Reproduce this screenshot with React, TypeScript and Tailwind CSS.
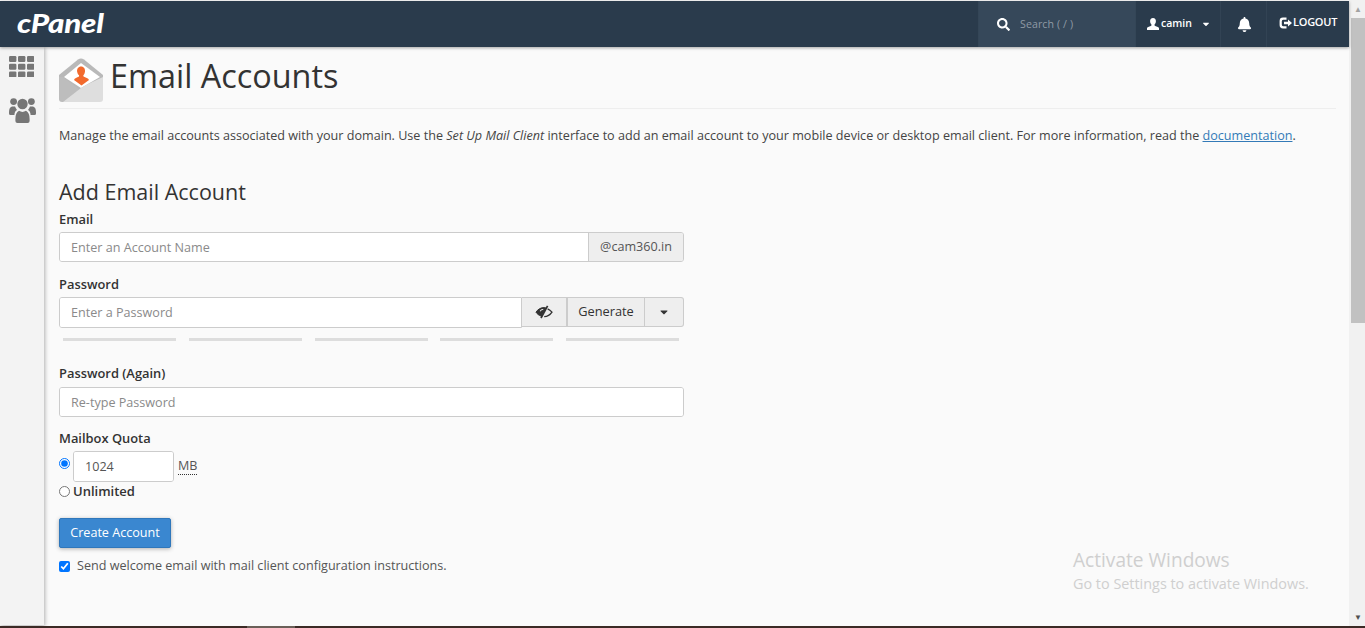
import React from "react";
import { FaSearch, FaBell, FaCaretDown } from "react-icons/fa";

function Grid() {
  const cells: React.ReactNode[] = [];
  for (let r = 0; r < 3; r++)
    for (let c = 0; c < 3; c++)
      cells.push(<rect key={`${r}-${c}`} x={c * 9} y={r * 7.7} width="7.4" height="6" rx="1.2" fill="#767676" />);
  return (
    <svg width="25" height="21" viewBox="0 0 25 21">
      {cells}
    </svg>
  );
}

function UsersIcon() {
  return (
    <svg width="27" height="26" viewBox="0 0 27 26" fill="#767676">
      <circle cx="4.6" cy="4.6" r="3.4" />
      <circle cx="22.4" cy="4.6" r="3.4" />
      <path d="M0 15 Q0 10.5 3 9.6 L6 9.6 Q6.8 11.6 8 13 Q5.6 14 5.4 18 L1.5 18 Q0 18 0 16.5 Z" />
      <path d="M27 15 Q27 10.5 24 9.6 L21 9.6 Q20.2 11.6 19 13 Q21.4 14 21.6 18 L25.5 18 Q27 18 27 16.5 Z" />
      <circle cx="13.5" cy="7" r="5.2" />
      <path d="M6.4 22 Q6.4 15.5 10 13.8 Q13.5 16 17 13.8 Q20.6 15.5 20.6 22 L20.6 24 Q20.6 26 18.6 26 L8.4 26 Q6.4 26 6.4 24 Z" />
    </svg>
  );
}

function EnvelopeIcon() {
  return (
    <svg width="44" height="44" viewBox="0 0 44 44" className="mt-[1px] shrink-0">
      <path d="M0 17 L19 1.5 Q22 -0.5 25 1.5 L44 17 L44 24 L22 36 L0 24 Z" fill="#b9b9b9" />
      <path d="M5 19 L22 5 L41 19 L22 30 Z" fill="#ffffff" />
      <path d="M22 8.5 C25 8.5 26.3 11 26 13.5 C25.8 15.5 25 16.6 24.3 17.3 L24.5 18.6 C26.5 19.4 29.5 20.4 30 22 L22.5 27.5 L15 22 C15.5 20.4 18 19.4 20 18.6 L20.1 17.3 C19.2 16.6 18.4 15.5 18.1 13.5 C17.8 11 19.3 8.5 22 8.5 Z" fill="#f26a2d" />
      <path d="M0 19 L0 41 Q0 44 3 44 L8 44 L22 33 L4 19 Z" fill="#bdbdbd" />
      <path d="M44 19 L44 41 Q44 44 41 44 L4 44 L22 30 L27 27 Z" fill="#dedede" />
    </svg>
  );
}

function LogoutIcon() {
  return (
    <svg width="13" height="12" viewBox="0 0 13 12">
      <path d="M7.5 0.6 H4 A3.4 3.4 0 0 0 0.6 4 V8 A3.4 3.4 0 0 0 4 11.4 H7.5 V9.3 H4.2 A1.5 1.5 0 0 1 2.8 7.8 V4.2 A1.5 1.5 0 0 1 4.2 2.7 H7.5 Z" fill="#fff" />
      <path d="M5 4.8 H9 V2.4 L13 6 L9 9.6 V7.2 H5 Z" fill="#fff" />
    </svg>
  );
}

function UserGlyph() {
  return (
    <svg width="12" height="12" viewBox="0 0 12 12" fill="#fff">
      <path d="M6 0 C8 0 9 1.5 8.9 3.3 C8.8 5 8.2 6 7.5 6.6 L7.7 7.8 C9 8.3 11.6 8.9 12 10 L12 12 L0 12 L0 10 C0.4 8.9 3 8.3 4.3 7.8 L4.5 6.6 C3.8 6 3.2 5 3.1 3.3 C3 1.5 4 0 6 0 Z" />
    </svg>
  );
}

function EyeSlash() {
  return (
    <svg width="18" height="14" viewBox="0 0 18 14">
      <path d="M1 7.2 C3 4.2 5.6 2.6 9 2.6 L11 3 L6.2 11 C4 10.4 2.4 9.2 1 7.2 Z" fill="#333" stroke="#333" strokeWidth="1" />
      <path d="M12.6 3.8 C14.4 4.6 15.8 5.8 17 7.2 C15.2 9.8 12.6 11.6 9.2 11.7" fill="none" stroke="#333" strokeWidth="1.3" />
      <path d="M12.6 0.8 L6 13" stroke="#333" strokeWidth="1.7" />
      <path d="M5.2 6.2 C6 4.8 7.2 4.4 8.2 4.6" fill="none" stroke="#eee" strokeWidth="1.1" />
    </svg>
  );
}

function Header() {
  return (
    <header className="relative z-10 flex h-[46px] w-full items-stretch bg-[#2a3b4c] shadow-[0_1px_3px_rgba(0,0,0,0.35)]">
      <div className="flex-1 pt-[6px] pl-[17px]">
        <div className="origin-left scale-x-[1.16] font-['Lato',sans-serif] text-[27px] leading-[32px] font-black tracking-[-0.2px] text-white italic">
          cPanel
        </div>
      </div>
      <div className="flex w-[158px] items-center border-x border-[#344657] bg-[#36485a] pl-[18px] text-[10.6px] text-[#8f9aa5]">
        <FaSearch className="mr-[10px] text-[13px] text-white" />
        <span className="pt-[1px] tracking-[0.1px]">Search ( / )</span>
      </div>
      <div className="flex w-[85px] items-center border-r border-[#324354] pl-[11px] text-[10.5px] font-semibold text-white">
        <UserGlyph />
        <span className="ml-[2px]">camin</span>
        <FaCaretDown className="ml-[9px] text-[10px]" />
      </div>
      <div className="flex w-[46px] items-center justify-center border-r border-[#324354] pl-[2px] text-white">
        <FaBell className="text-[15px]" />
      </div>
      <div className="flex w-[82px] items-center gap-[1px] pb-[3px] pl-[12px] text-[11px] font-semibold tracking-[-0.25px] text-white">
        <LogoutIcon />
        <span>LOGOUT</span>
      </div>
    </header>
  );
}

function Sidebar() {
  return (
    <aside className="flex h-[578px] w-[44px] shrink-0 flex-col items-start bg-[#f3f3f3] pt-[9px] pl-[9px] shadow-[1px_1px_4px_rgba(0,0,0,0.3)]">
      <Grid />
      <div className="mt-[20px]">
        <UsersIcon />
      </div>
    </aside>
  );
}

const inputClass =
  "h-full w-full bg-white px-[11px] text-[12.6px] text-[#555] placeholder:text-[#8a8a8a] outline-none font-['Open_Sans',sans-serif]";

function Label({ children }: { children: React.ReactNode }) {
  return <div className="text-[12.9px] leading-[20px] font-semibold text-[#333]">{children}</div>;
}

function Form() {
  return (
    <div className="w-[625px]">
      <h2 className="mt-[31px] text-[21.5px] leading-[30px] font-normal text-[#333]">Add Email Account</h2>
      <div className="mt-[2px]">
        <Label>Email</Label>
      </div>
      <div className="mt-[3px] flex h-[30px] overflow-hidden rounded-[3px] border border-[#ccc]">
        <input className={inputClass} placeholder="Enter an Account Name" />
        <div className="flex w-[95px] shrink-0 items-center justify-center border-l border-[#ccc] bg-[#eee] text-[12.6px] text-[#555]">
          @cam360.in
        </div>
      </div>
      <div className="mt-[12px]">
        <Label>Password</Label>
      </div>
      <div className="mt-[3px] flex h-[30px]">
        <div className="h-[31px] flex-1 overflow-hidden rounded-l-[3px] border border-[#ccc]">
          <input className={inputClass} placeholder="Enter a Password" />
        </div>
        <div className="flex w-[44px] shrink-0 items-center justify-center border-y border-[#ccc] bg-[#eee]">
          <EyeSlash />
        </div>
        <div className="flex w-[118px] shrink-0 rounded-r-[3px] border border-l-2 border-[#ccc] bg-[#eee] text-[12.8px] text-[#333]">
          <div className="flex w-[77px] items-center justify-center border-r border-[#ccc]">Generate</div>
          <div className="flex flex-1 items-center justify-center">
            <FaCaretDown className="text-[12px]" />
          </div>
        </div>
      </div>
      <div className="mt-[11px] flex h-[3px] gap-[12.75px] pr-[5px] pl-[4px]">
        <div className="flex-1 bg-[#ddd]" />
        <div className="flex-1 bg-[#ddd]" />
        <div className="flex-1 bg-[#ddd]" />
        <div className="flex-1 bg-[#ddd]" />
        <div className="flex-1 bg-[#ddd]" />
      </div>
      <div className="mt-[22px]">
        <Label>Password (Again)</Label>
      </div>
      <div className="mt-[4px] h-[30px] overflow-hidden rounded-[3px] border border-[#ccc]">
        <input className={inputClass} placeholder="Re-type Password" />
      </div>
      <div className="mt-[11px]">
        <Label>Mailbox Quota</Label>
      </div>
      <div className="mt-[3px] flex h-[31px] items-start">
        <input type="radio" name="quota" defaultChecked className="mt-[7px] ml-0 h-[11px] w-[11px] accent-[#0075ff]" />
        <div className="ml-[3px] h-[31px] w-[101px] overflow-hidden rounded-[3px] border border-[#ccc]">
          <input className={inputClass} defaultValue="1024" />
        </div>
        <span className="mt-[6px] ml-[4px] border-b border-dotted border-[#333] text-[12.6px] leading-[17px] text-[#555]">MB</span>
      </div>
      <div className="flex h-[20px] items-center">
        <input type="radio" name="quota" className="mb-[2px] h-[11px] w-[11px]" />
        <span className="ml-[3px] text-[13px] font-semibold text-[#333]">Unlimited</span>
      </div>
      <button className="mt-[16px] block h-[30px] w-[112px] rounded-[2px] border border-[#2f77bb] bg-[#3a87d0] pt-[1px] text-[12.6px] text-white shadow-[0_1px_4px_rgba(0,0,0,0.3)]">
        Create Account
      </button>
      <label className="mt-[8px] flex h-[20px] items-center">
        <input type="checkbox" defaultChecked className="h-[11px] w-[11px] accent-[#0075ff]" />
        <span className="ml-[7px] text-[12.6px] text-[#555]">Send welcome email with mail client configuration instructions.</span>
      </label>
    </div>
  );
}

function Main() {
  return (
    <main className="relative min-w-0 flex-1 pr-[13px] pl-[15px]">
      <div className="flex h-[62px] items-start border-b border-[#eee] pt-[10px]">
        <EnvelopeIcon />
        <h1 className="ml-[7px] text-[32.4px] leading-[36px] font-normal text-[#333]">Email Accounts</h1>
      </div>
      <p className="mt-[17px] text-[12.6px] leading-[20px] whitespace-nowrap text-[#444]">
        Manage the email accounts associated with your domain. Use the <em>Set Up Mail Client</em> interface to add an email account to your mobile device or desktop email client. For more information, read the{" "}
        <a className="text-[#337ab7] underline">documentation</a>.
      </p>
      <Form />
      <div className="absolute top-[500px] left-[1029px] leading-none text-[#cfcfcf]">
        <div className="text-[19.1px] leading-[26px]">Activate Windows</div>
        <div className="mt-[1px] text-[14.4px] leading-[20px] whitespace-nowrap">Go to Settings to activate Windows.</div>
      </div>
    </main>
  );
}

function Scrollbar() {
  return (
    <div className="flex h-full w-[16px] shrink-0 flex-col items-center bg-[#f1f1f1] pl-[2px]">
      <div className="flex h-[18px] items-center justify-center text-[8px] leading-none text-[#a3a3a3]">▲</div>
      <div className="h-[305px] w-full bg-[#c1c1c1]" />
      <div className="flex-1" />
      <div className="flex h-[18px] items-center justify-center text-[8px] leading-none text-[#505050]">▼</div>
    </div>
  );
}

export default function App() {
  return (
    <div className="flex h-[628px] w-[1365px] flex-col overflow-hidden bg-[#fafafa] font-['Open_Sans',sans-serif]">
      <div className="flex min-h-0 flex-1">
        <div className="flex min-w-0 flex-1 flex-col pt-[1px]">
          <Header />
          <div className="flex min-h-0 flex-1">
            <Sidebar />
            <Main />
          </div>
        </div>
        <Scrollbar />
      </div>
      <div className="flex h-[2px] shrink-0 bg-[#3b2a25]">
        <div className="ml-[247px] w-[48px] bg-[#6a5f58]" />
      </div>
    </div>
  );
}
